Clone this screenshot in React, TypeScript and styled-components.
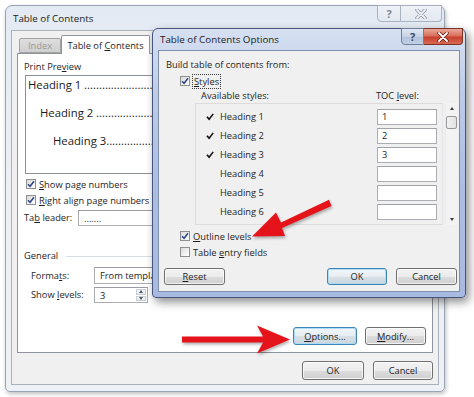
import React from 'react';
import styled, { createGlobalStyle } from 'styled-components';

const GlobalStyle = createGlobalStyle`
  html, body { margin: 0; padding: 0; background: #ffffff; }
  body {
    font-family: "Open Sans", "Noto Sans", Arial, sans-serif;
    font-size: 9.3px;
    color: #1e1e1e;
  }
  * { box-sizing: border-box; }
  u { text-decoration-thickness: 1px; text-underline-offset: 1px; }
`;

const Stage = styled.div`
  position: relative;
  width: 474px;
  height: 397px;
  overflow: hidden;
  padding: 5px 0 0 5px;
`;

// outer dialog (inactive, behind)
const Window = styled.div`
  width: 440px;
  height: 387px;
  border: 1px solid #98a4b3;
  border-radius: 7px 7px 5px 5px;
  background: linear-gradient(180deg, #e3eaf3 0%, #ecf0f5 45%, #eef1f5 100%);
  display: flex;
  flex-direction: column;
  box-shadow: 1px 2px 4px rgba(0, 0, 0, 0.25);
`;

const TitleBar = styled.div<{ $h: number; $pl: number }>`
  height: ${p => p.$h}px;
  flex: none;
  display: flex;
  align-items: center;
  justify-content: space-between;
  padding: 0 2px 0 ${p => p.$pl}px;
`;

const TitleText = styled.span`
  font-size: 9.8px;
  color: #1b1b1b;
  white-space: nowrap;
`;

const Captions = styled.div`
  align-self: flex-start;
  margin-top: -1px;
  height: 17px;
  display: flex;
`;

const CaptionButton = styled.div<{ $w: number; $kind: 'help' | 'close'; $active?: boolean }>`
  width: ${p => p.$w}px;
  height: 100%;
  display: flex;
  align-items: center;
  justify-content: center;
  border: 1px solid ${p => (p.$active ? (p.$kind === 'close' ? '#7b3328' : '#6f7f99') : '#a8b2c0')};
  border-left-width: ${p => (p.$kind === 'close' ? 0 : 1)}px;
  border-radius: ${p => (p.$kind === 'close' ? '0 0 4px 0' : '0 0 0 4px')};
  background: ${p =>
    !p.$active
      ? 'linear-gradient(180deg, #eef2f7 0%, #e3e9f1 100%)'
      : p.$kind === 'close'
      ? 'linear-gradient(180deg, #e9a99a 0%, #d9705d 45%, #c8412b 55%, #d96a55 100%)'
      : 'linear-gradient(180deg, #dfe7f3 0%, #c6d3e7 50%, #b3c3dc 55%, #c3d0e4 100%)'};
  color: ${p => (p.$active ? '#3b4a60' : '#7d8898')};
  font-size: 11px;
  font-weight: bold;
`;

const Client = styled.div`
  margin: 0 5px;
  height: 355px;
  border: 1px solid #a9b1bc;
  background: #f0f0f0;
  padding: 4px 5px 0 5px;
  display: flex;
  flex-direction: column;
`;

const Tabs = styled.div`
  height: 19px;
  margin: 0 0 -1px 2px;
  display: flex;
  align-items: flex-end;
  position: relative;
  z-index: 1;
`;

const Tab = styled.div<{ $active?: boolean; $w: number }>`
  width: ${p => p.$w}px;
  height: ${p => (p.$active ? 19 : 15)}px;
  margin-bottom: ${p => (p.$active ? 0 : 1)}px;
  border: 1px solid ${p => (p.$active ? '#8e939c' : '#a3a3a3')};
  border-bottom: ${p => (p.$active ? 'none' : '1px solid #a3a3a3')};
  border-radius: 2px 2px 0 0;
  background: ${p => (p.$active ? '#ffffff' : 'linear-gradient(180deg, #dedede 0%, #cfcfcf 100%)')};
  color: ${p => (p.$active ? '#1e1e1e' : '#9a9a9a')};
  display: flex;
  align-items: center;
  justify-content: center;
  padding-top: ${p => (p.$active ? 1 : 0)}px;
  white-space: nowrap;
`;

const Panel = styled.div`
  height: 300px;
  border: 1px solid #8e939c;
  background: #ffffff;
  display: flex;
  flex-direction: column;
  padding: 6px 6px 7px 6px;
`;

const Label = styled.div<{ $w?: number; $indent?: number }>`
  height: 14px;
  line-height: 14px;
  white-space: nowrap;
  flex: none;
  width: ${p => (p.$w ? `${p.$w}px` : 'auto')};
  padding-left: ${p => p.$indent || 0}px;
`;

const Preview = styled.div`
  margin: 1px 0 0 1px;
  width: 230px;
  height: 99px;
  border: 1px solid #8b9097;
  overflow: hidden;
  font-size: 11.3px;
  color: #1a1a1a;
`;

const PreviewLine = styled.div<{ $indent: number }>`
  height: 28px;
  line-height: 18px;
  padding-left: ${p => p.$indent}px;
  white-space: nowrap;
`;

const CheckRow = styled.div<{ $mt: number; $ml: number; $h?: number }>`
  height: ${p => p.$h || 16}px;
  margin: ${p => p.$mt}px 0 0 ${p => p.$ml}px;
  display: flex;
  align-items: center;
  gap: 3px;
  white-space: nowrap;
`;

const Box = styled.span`
  width: 10px;
  height: 10px;
  flex: none;
  border: 1px solid #8e8f8f;
  background: linear-gradient(135deg, #d9d9d9 0%, #f6f6f6 70%, #ffffff 100%);
  display: flex;
  align-items: center;
  justify-content: center;
`;

const FieldRow = styled.div<{ $mt: number; $h: number; $indent?: number }>`
  height: ${p => p.$h}px;
  margin-top: ${p => p.$mt}px;
  padding-left: ${p => p.$indent || 0}px;
  display: flex;
  align-items: center;
`;

const Field = styled.div<{ $w: number }>`
  width: ${p => p.$w}px;
  height: 100%;
  border: 1px solid #abadb3;
  border-top-color: #9a9ca3;
  background: #ffffff;
  display: flex;
  align-items: center;
  padding-left: 5px;
  white-space: nowrap;
  overflow: hidden;
  position: relative;
`;

const Spin = styled.div`
  position: absolute;
  right: 1px;
  top: 1px;
  bottom: 1px;
  width: 10px;
  display: flex;
  flex-direction: column;
  gap: 1px;
`;

const SpinHalf = styled.div<{ $down?: boolean }>`
  flex: 1;
  border: 1px solid #c9ced6;
  background: linear-gradient(180deg, #f7f8fa, #e6e9ee);
  display: flex;
  align-items: center;
  justify-content: center;
  &::after {
    content: '';
    border-left: 2.5px solid transparent;
    border-right: 2.5px solid transparent;
    ${p => (p.$down ? 'border-top: 3px solid #4d5866;' : 'border-bottom: 3px solid #4d5866;')}
  }
`;

const GroupRow = styled.div`
  height: 14px;
  margin-top: 23px;
  display: flex;
  align-items: center;
  gap: 8px;
  &::after {
    content: '';
    flex: 1;
    height: 1px;
    background: #d6dde3;
  }
`;

const ButtonRow = styled.div<{ $mt?: string; $h: number; $gap: number }>`
  height: ${p => p.$h}px;
  margin-top: ${p => p.$mt || 'auto'};
  flex: none;
  display: flex;
  justify-content: flex-end;
  gap: ${p => p.$gap}px;
`;

const Button = styled.div<{ $w: number; $default?: boolean }>`
  width: ${p => p.$w}px;
  height: 100%;
  border: 1px solid ${p => (p.$default ? '#3c86b4' : '#707070')};
  border-radius: 3px;
  background: ${p =>
    p.$default
      ? 'linear-gradient(180deg, #f1f6f9 0%, #e6edf2 50%, #d8e0e6 51%, #ccd6dd 100%)'
      : 'linear-gradient(180deg, #f3f3f3 0%, #ebebeb 50%, #dddddd 51%, #cfcfcf 100%)'};
  box-shadow: inset 0 0 0 1px ${p => (p.$default ? 'rgba(170, 220, 245, 0.9)' : 'rgba(255, 255, 255, 0.75)')};
  display: flex;
  align-items: center;
  justify-content: center;
  white-space: nowrap;
  color: #1e1e1e;
`;

// inner dialog: a window lying over the first one
const OptionsDialog = styled.div`
  position: absolute;
  left: 152px;
  top: 28px;
  width: 314px;
  height: 270px;
  border: 1px solid #46567a;
  border-radius: 6px 6px 4px 4px;
  background: linear-gradient(180deg, #d6e0f1 0%, #bccbea 25%, #acbde4 60%, #a9bae2 100%);
  box-shadow: 3px 4px 10px rgba(0, 0, 0, 0.45);
  display: flex;
  flex-direction: column;
`;

const OptionsClient = styled.div`
  margin: 0 5px;
  height: 242px;
  border: 1px solid #7f8ea9;
  background: #f0f0f0;
  padding: 7px 2px 0 5px;
  display: flex;
  flex-direction: column;
`;

const FocusText = styled.span`
  outline: 1px dotted #3a3a3a;
  outline-offset: 0;
  padding: 0 1px;
`;

const ListArea = styled.div`
  height: 122px;
  margin-left: 31px;
  display: flex;
  flex: none;
`;

const ListBox = styled.div`
  width: 248px;
  height: 100%;
  border: 1px solid #dcdcdc;
  border-right-color: #e6e6e6;
  padding-top: 5px;
`;

const StyleRow = styled.div`
  height: 19px;
  display: flex;
  align-items: flex-start;
`;

const StyleCheck = styled.span`
  width: 24px;
  height: 16px;
  flex: none;
  padding-left: 10px;
  display: flex;
  align-items: center;
`;

const StyleName = styled.span`
  width: 157px;
  height: 16px;
  line-height: 16px;
  flex: none;
`;

const LevelInput = styled.div`
  width: 60px;
  height: 16px;
  border: 1px solid #abadb3;
  border-top-color: #a0a3aa;
  background: #ffffff;
  line-height: 14px;
  padding-left: 4px;
`;

const Scrollbar = styled.div`
  width: 12px;
  margin-left: 2px;
  height: 100%;
  background: #f3f3f3;
  border-left: 1px solid #ebebeb;
  display: flex;
  flex-direction: column;
  align-items: center;
  padding: 4px 0 4px;
`;

const ScrollArrow = styled.div<{ $down?: boolean }>`
  width: 0;
  height: 0;
  border-left: 2.5px solid transparent;
  border-right: 2.5px solid transparent;
  ${p => (p.$down ? 'border-top: 3px solid #3b3b3b; margin-top: auto;' : 'border-bottom: 3px solid #3b3b3b;')}
`;

const Thumb = styled.div`
  width: 11px;
  height: 13px;
  margin-top: 6px;
  border: 1px solid #979797;
  border-radius: 2px;
  background: linear-gradient(90deg, #f2f2f2 0%, #e2e2e2 100%);
`;

const Spacer = styled.div`
  flex: 1;
`;

const ArrowLayer = styled.svg`
  position: absolute;
  left: 0;
  top: 0;
  pointer-events: none;
  filter: drop-shadow(1px 2px 1.5px rgba(0, 0, 0, 0.3));
`;

const Tick = () => (
  <svg width="8" height="8" viewBox="0 0 8 8">
    <path d="M1 4.2 L3.1 6.3 L7 1.3" fill="none" stroke="#2b4685" strokeWidth="1.5" />
  </svg>
);

const CheckBox = ({ checked }: { checked?: boolean }) => <Box>{checked && <Tick />}</Box>;

const HeavyCheck = () => (
  <svg width="8" height="8" viewBox="0 0 8 8">
    <path d="M0.3 4.3 L1.7 3.2 L3.1 5 L6.6 0.4 L7.8 1.3 L3.2 7.6 Z" fill="#111" />
  </svg>
);

const CloseGlyph = ({ active }: { active?: boolean }) => (
  <svg width="12" height="10" viewBox="0 0 12 10">
    <path d="M2 1 L10 9 M10 1 L2 9" stroke={active ? '#6a1c12' : '#8d97a5'} strokeWidth="3.4" strokeLinecap="round" />
    <path d="M2 1 L10 9 M10 1 L2 9" stroke={active ? '#ffffff' : '#eef1f5'} strokeWidth="1.8" strokeLinecap="round" />
  </svg>
);

const dots = '......................................................';

const styleRows = [
  { name: 'Heading 1', level: '1', on: true },
  { name: 'Heading 2', level: '2', on: true },
  { name: 'Heading 3', level: '3', on: true },
  { name: 'Heading 4', level: '', on: false },
  { name: 'Heading 5', level: '', on: false },
  { name: 'Heading 6', level: '', on: false },
];

const App = () => {
  return (
    <>
      <GlobalStyle />
      <Stage>
        <Window>
          <TitleBar $h={24} $pl={7}>
            <TitleText>Table of Contents</TitleText>
            <Captions>
              <CaptionButton $w={24} $kind="help">?</CaptionButton>
              <CaptionButton $w={41} $kind="close">
                <CloseGlyph />
              </CaptionButton>
            </Captions>
          </TitleBar>
          <Client>
            <Tabs>
              <Tab $w={42}>Index</Tab>
              <Tab $w={89} $active>
                <span>
                  Table of <u>C</u>ontents
                </span>
              </Tab>
            </Tabs>
            <Panel>
              <Label>
                Print Pre<u>v</u>iew
              </Label>
              <Preview>
                <PreviewLine $indent={2}>Heading 1 {dots}</PreviewLine>
                <PreviewLine $indent={14}>Heading 2 {dots}</PreviewLine>
                <PreviewLine $indent={27}>Heading 3{dots}</PreviewLine>
              </Preview>
              <CheckRow $mt={2} $ml={2}>
                <CheckBox checked />
                <span>
                  <u>S</u>how page numbers
                </span>
              </CheckRow>
              <CheckRow $mt={0} $ml={2}>
                <CheckBox checked />
                <span>
                  <u>R</u>ight align page numbers
                </span>
              </CheckRow>
              <FieldRow $mt={2} $h={16}>
                <Label $w={54}>
                  Ta<u>b</u> leader:
                </Label>
                <Field $w={150}>.......</Field>
              </FieldRow>
              <GroupRow>
                <Label>General</Label>
              </GroupRow>
              <FieldRow $mt={4} $h={17} $indent={7}>
                <Label $w={63}>
                  Forma<u>t</u>s:
                </Label>
                <Field $w={150}>From template</Field>
              </FieldRow>
              <FieldRow $mt={3} $h={16} $indent={7}>
                <Label $w={63}>
                  Show <u>l</u>evels:
                </Label>
                <Field $w={54}>
                  3
                  <Spin>
                    <SpinHalf />
                    <SpinHalf $down />
                  </Spin>
                </Field>
              </FieldRow>
              <ButtonRow $h={18} $gap={8}>
                <Button $w={64} $default>
                  <span>
                    <u>O</u>ptions...
                  </span>
                </Button>
                <Button $w={61}>
                  <span>
                    <u>M</u>odify...
                  </span>
                </Button>
              </ButtonRow>
            </Panel>
            <ButtonRow $mt="8px" $h={19} $gap={9}>
              <Button $w={62}>OK</Button>
              <Button $w={60}>Cancel</Button>
            </ButtonRow>
          </Client>
        </Window>

        <OptionsDialog>
          <TitleBar $h={21} $pl={7}>
            <TitleText>Table of Contents Options</TitleText>
            <Captions>
              <CaptionButton $w={23} $kind="help" $active>
                ?
              </CaptionButton>
              <CaptionButton $w={39} $kind="close" $active>
                <CloseGlyph active />
              </CaptionButton>
            </Captions>
          </TitleBar>
          <OptionsClient>
            <Label $indent={2}>Build table of contents from:</Label>
            <CheckRow $mt={2} $ml={16} $h={14}>
              <CheckBox checked />
              <FocusText>
                <u>S</u>tyles
              </FocusText>
            </CheckRow>
            <FieldRow $mt={1} $h={14} $indent={37}>
              <Label $w={175}>Available styles:</Label>
              <Label>
                TOC <u>l</u>evel:
              </Label>
            </FieldRow>
            <ListArea>
              <ListBox>
                {styleRows.map(r => (
                  <StyleRow key={r.name}>
                    <StyleCheck>{r.on && <HeavyCheck />}</StyleCheck>
                    <StyleName>{r.name}</StyleName>
                    <LevelInput>{r.level}</LevelInput>
                  </StyleRow>
                ))}
              </ListBox>
              <Scrollbar>
                <ScrollArrow />
                <Thumb />
                <ScrollArrow $down />
              </Scrollbar>
            </ListArea>
            <CheckRow $mt={4} $ml={16} $h={14}>
              <CheckBox checked />
              <span>
                <u>O</u>utline levels
              </span>
            </CheckRow>
            <CheckRow $mt={2} $ml={16} $h={14}>
              <CheckBox />
              <span>
                Table <u>e</u>ntry fields
              </span>
            </CheckRow>
            <ButtonRow $mt="9px" $h={17} $gap={9}>
              <Button $w={61}>
                <span>
                  <u>R</u>eset
                </span>
              </Button>
              <Spacer />
              <Button $w={60} $default>
                OK
              </Button>
              <Button $w={61}>Cancel</Button>
            </ButtonRow>
          </OptionsClient>
        </OptionsDialog>

        <ArrowLayer width="474" height="397" viewBox="0 0 474 397">
          <polygon
            fill="#e5141b"
            points="329,199.8 281,222.6 276,212.5 252,236.5 285,236 282,228 331.5,206"
          />
          <polygon
            fill="#e5141b"
            points="182,336.5 263,336.5 257,325.5 290,339.5 257,353.5 263,342.5 182,342.5"
          />
        </ArrowLayer>
      </Stage>
    </>
  );
};

export default App;
